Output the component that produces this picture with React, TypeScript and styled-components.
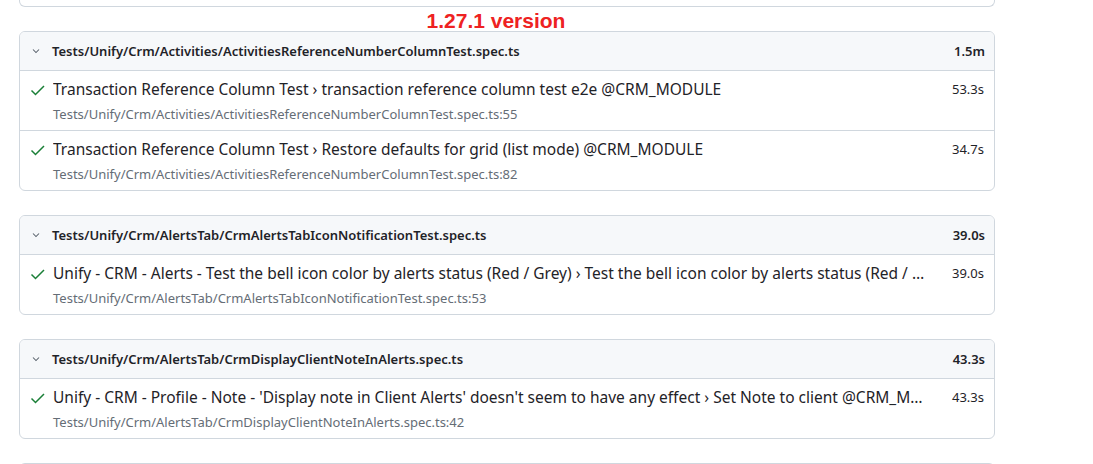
import styled, { createGlobalStyle } from "styled-components";

const GlobalStyle = createGlobalStyle`
  body {
    margin: 0;
    background: #ffffff;
    font-family: "Noto Sans", "Open Sans", sans-serif;
    color: #1f2328;
  }
`;

const Page = styled.div`
  display: flex;
  flex-direction: column;
  width: 976px;
  margin-left: 19px;
`;

const Card = styled.div<{ $stub?: "top" | "bottom" }>`
  border: 1px solid #d0d7de;
  border-radius: 6px;
  overflow: hidden;
  ${({ $stub }) =>
    $stub === "top" &&
    `height: 6px; border-top: none; border-top-left-radius: 0; border-top-right-radius: 0;`}
  ${({ $stub }) =>
    $stub === "bottom" &&
    `height: 20px; border-bottom: none;`}
`;

const Version = styled.div`
  height: 24px;
  line-height: 28px;
  padding-right: 22px;
  text-align: center;
  font-family: "Liberation Sans", Arial, sans-serif;
  font-weight: 700;
  font-size: 21px;
  color: #ee2222;
`;

const Spacer = styled.div`
  height: 24px;
`;

const Header = styled.div`
  display: flex;
  align-items: center;
  height: 38px;
  padding: 0 9px 0 10px;
  background: #f6f8fa;
  border-bottom: 1px solid #d0d7de;
  font-size: 13px;
  font-weight: 600;
`;

const Chevron = styled.svg`
  width: 12px;
  height: 12px;
  margin-right: 10px;
  color: #57606a;
  flex: none;
`;

const HeaderTitle = styled.div`
  flex: 1;
`;

const Row = styled.div`
  display: flex;
  height: 59px;
  padding: 0 10px;
  border-bottom: 1px solid #d0d7de;
  &:last-child {
    border-bottom: none;
  }
`;

const Check = styled.svg`
  width: 16px;
  height: 16px;
  margin-top: 11px;
  margin-right: 7px;
  color: #1a7f37;
  flex: none;
`;

const RowBody = styled.div`
  flex: 1;
  min-width: 0;
  padding-top: 7px;
  padding-right: 22px;
`;

const Title = styled.div`
  font-size: 15.5px;
  line-height: 22px;
  white-space: nowrap;
  overflow: hidden;
  text-overflow: ellipsis;
`;

const Location = styled.div`
  margin-top: 5px;
  font-size: 13px;
  line-height: 18px;
  color: #656d76;
`;

const Duration = styled.div`
  padding-top: 9px;
  font-size: 13px;
  color: #1f2328;
`;

const HeaderDuration = styled.div`
  font-size: 13px;
  font-weight: 600;
`;

type Test = { title: string; location: string; duration: string };
type Suite = { file: string; duration: string; tests: Test[] };

const suites: Suite[] = [
  {
    file: "Tests/Unify/Crm/Activities/ActivitiesReferenceNumberColumnTest.spec.ts",
    duration: "1.5m",
    tests: [
      {
        title:
          "Transaction Reference Column Test › transaction reference column test e2e @CRM_MODULE",
        location: "Tests/Unify/Crm/Activities/ActivitiesReferenceNumberColumnTest.spec.ts:55",
        duration: "53.3s",
      },
      {
        title:
          "Transaction Reference Column Test › Restore defaults for grid (list mode) @CRM_MODULE",
        location: "Tests/Unify/Crm/Activities/ActivitiesReferenceNumberColumnTest.spec.ts:82",
        duration: "34.7s",
      },
    ],
  },
  {
    file: "Tests/Unify/Crm/AlertsTab/CrmAlertsTabIconNotificationTest.spec.ts",
    duration: "39.0s",
    tests: [
      {
        title:
          "Unify - CRM - Alerts - Test the bell icon color by alerts status (Red / Grey) › Test the bell icon color by alerts status (Red / Grey) @CRM_MODULE",
        location: "Tests/Unify/Crm/AlertsTab/CrmAlertsTabIconNotificationTest.spec.ts:53",
        duration: "39.0s",
      },
    ],
  },
  {
    file: "Tests/Unify/Crm/AlertsTab/CrmDisplayClientNoteInAlerts.spec.ts",
    duration: "43.3s",
    tests: [
      {
        title:
          "Unify - CRM - Profile - Note - 'Display note in Client Alerts' doesn't seem to have any effect › Set Note to client @CRM_MODULE",
        location: "Tests/Unify/Crm/AlertsTab/CrmDisplayClientNoteInAlerts.spec.ts:42",
        duration: "43.3s",
      },
    ],
  },
];

function SuiteCard({ suite }: { suite: Suite }) {
  return (
    <Card>
      <Header>
        <Chevron viewBox="0 0 16 16" fill="none" stroke="currentColor" strokeWidth="1.4">
          <path d="M4 6l4 4 4-4" />
        </Chevron>
        <HeaderTitle>{suite.file}</HeaderTitle>
        <HeaderDuration>{suite.duration}</HeaderDuration>
      </Header>
      {suite.tests.map((t) => (
        <Row key={t.location}>
          <Check viewBox="0 0 16 16" fill="none" stroke="currentColor" strokeWidth="1.5">
            <path d="M1.5 8.5l4 4 8.5-8.5" />
          </Check>
          <RowBody>
            <Title>{t.title}</Title>
            <Location>{t.location}</Location>
          </RowBody>
          <Duration>{t.duration}</Duration>
        </Row>
      ))}
    </Card>
  );
}

export default function App() {
  return (
    <>
      <GlobalStyle />
      <Page>
        <Card $stub="top" />
        <Version>1.27.1 version</Version>
        {suites.map((s, i) => (
          <div key={s.file}>
            {i > 0 && <Spacer />}
            <SuiteCard suite={s} />
          </div>
        ))}
        <Spacer />
        <Card $stub="bottom" />
      </Page>
    </>
  );
}
